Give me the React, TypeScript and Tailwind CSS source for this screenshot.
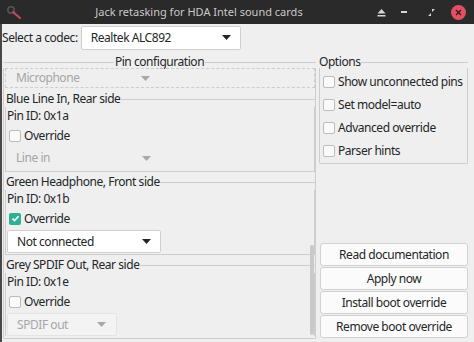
import { ReactNode } from "react";

function Check({ checked = false }: { checked?: boolean }) {
  if (checked) {
    return (
      <span className="w-[12px] h-[12px] rounded-[2px] bg-[#2eaf96] flex items-center justify-center shrink-0">
        <svg width="9" height="9" viewBox="0 0 9 9">
          <path d="M1.5 4.6 L3.6 6.6 L7.6 2.2" stroke="#fff" strokeWidth="1.6" fill="none" />
        </svg>
      </span>
    );
  }
  return <span className="w-[12px] h-[12px] rounded-[2px] border border-[#bcbcbc] bg-[#fafafa] shrink-0" />;
}

function CheckRow({ label, checked }: { label: string; checked?: boolean }) {
  return (
    <div className="flex items-center gap-[3px] h-[23px]">
      <Check checked={checked} />
      <span>{label}</span>
    </div>
  );
}

function Arrow({ dim = false }: { dim?: boolean }) {
  return (
    <svg width="9" height="5" viewBox="0 0 9 5">
      <path d="M0 0 H9 L4.5 5 Z" fill={dim ? "#a8a8a8" : "#232627"} />
    </svg>
  );
}

function PinGroup({ title, children, last }: { title: string; children: ReactNode; last?: boolean }) {
  return (
    <div className="flex flex-col">
      <div className="flex items-center h-[17px]">
        <span className="pl-[1px]">{title}</span>
        <div className="flex-1 border-t border-[#cdcdcd] mt-[2px]" />
      </div>
      <div className={`border-l border-r border-[#cdcdcd] ${last ? "" : "border-b"} flex flex-col pl-[1px]`}>
        {children}
      </div>
    </div>
  );
}

export default function App() {
  return (
    <div className="w-[474px] h-[342px] flex flex-col bg-[#efefef] text-[#232627] font-['Noto_Sans',sans-serif] text-[12px] tracking-[-0.45px] overflow-hidden">
      {/* title bar */}
      <div className="h-[24px] bg-[#2a2a2a] flex items-center shrink-0">
        <div className="w-[28px] flex justify-center">
          <svg width="18" height="16" viewBox="0 0 18 16">
            <circle cx="6" cy="6" r="3.2" stroke="#555" strokeWidth="1.6" fill="none" />
            <path d="M8 8 L15 14" stroke="#c2475f" strokeWidth="2.2" strokeLinecap="round" />
          </svg>
        </div>
        <div className="w-[342px] text-center text-[#c9c9c9] text-[11px] tracking-[0px]">
          Jack retasking for HDA Intel sound cards
        </div>
        <div className="flex items-center">
          <div className="w-[22px] flex justify-center">
            <svg width="9" height="9" viewBox="0 0 9 9">
              <path d="M4.5 1 L8.5 5.5 H0.5 Z M0.5 7 H8.5 V8.5 H0.5 Z" fill="#d6d6d6" />
            </svg>
          </div>
          <div className="w-[24px] flex justify-center">
            <div className="w-[6px] h-[2px] bg-[#d6d6d6]" />
          </div>
          <div className="w-[30px] flex justify-center">
            <svg width="9" height="9" viewBox="0 0 9 9">
              <path d="M5 4 L5 1 L8 1 Z M4 5 L4 8 L1 8 Z" fill="#d6d6d6" />
            </svg>
          </div>
          <div className="ml-[5px] w-[15px] h-[15px] rounded-full bg-[#e34f63] flex items-center justify-center">
            <svg width="7" height="7" viewBox="0 0 7 7">
              <path d="M1 1 L6 6 M6 1 L1 6" stroke="#3a1a1f" strokeWidth="1.5" />
            </svg>
          </div>
        </div>
      </div>

      {/* body */}
      <div className="flex-1 flex flex-col border-l-2 border-[#484848] min-h-0">
        <div className="flex items-center h-[25px] mt-[1px] gap-[3px]">
          <span>Select a codec:</span>
          <div className="w-[160px] h-[24px] bg-white border border-[#d0d0d0] rounded-[2px] flex items-center justify-between pl-[9px] pr-[9px]">
            <span>Realtek ALC892</span>
            <Arrow />
          </div>
        </div>

        <div className="flex flex-1 min-h-0 pt-[5px] pb-[3px]">
          {/* Pin configuration */}
          <div className="w-[313px] ml-[1px] flex flex-col">
            <div className="flex items-center h-[13px]">
              <div className="flex-1 border-t border-[#cdcdcd] mt-[2px]" />
              <span className="px-[1px]">Pin configuration</span>
              <div className="flex-1 border-t border-[#cdcdcd] mt-[2px]" />
            </div>
            <div className="flex-1 relative border-l border-r border-b border-[#cdcdcd] rounded-b-[2px] overflow-hidden pl-[1px]">
              <div className="flex flex-col">
                <div className="h-[20px] border-t border-dashed border-x border-b border-[#cdcdcd] flex items-start pt-[1px]">
                  <div className="w-[150px] flex items-center justify-between pl-[10px] pr-[6px] text-[#a6a6a6] h-[16px]">
                    <span>Microphone</span>
                    <Arrow dim />
                  </div>
                </div>

                <div className="h-[2px]" />
                <PinGroup title="Blue Line In, Rear side">
                  <div className="h-[17px] flex items-center">Pin ID: 0x1a</div>
                  <div className="pl-[2px]">
                    <CheckRow label="Override" />
                  </div>
                  <div className="w-[150px] h-[22px] flex items-center justify-between pl-[9px] pr-[6px] text-[#a6a6a6] mb-[2px]">
                    <span>Line in</span>
                    <Arrow dim />
                  </div>
                </PinGroup>

                <div className="h-[1px]" />
                <PinGroup title="Green Headphone, Front side">
                  <div className="h-[17px] flex items-center">Pin ID: 0x1b</div>
                  <div className="pl-[2px]">
                    <CheckRow label="Override" checked />
                  </div>
                  <div className="w-[154px] h-[23px] bg-white border border-[#d0d0d0] rounded-[2px] flex items-center justify-between pl-[9px] pr-[9px] mb-[1px]">
                    <span>Not connected</span>
                    <Arrow />
                  </div>
                </PinGroup>

                <div className="h-[1px]" />
                <PinGroup title="Grey SPDIF Out, Rear side" last>
                  <div className="h-[17px] flex items-center">Pin ID: 0x1e</div>
                  <div className="pl-[2px]">
                    <CheckRow label="Override" />
                  </div>
                  <div className="w-[110px] h-[23px] bg-[#f3f3f3] border border-[#e4e4e4] rounded-[2px] flex items-center justify-between pl-[9px] pr-[10px] text-[#a6a6a6]">
                    <span>SPDIF out</span>
                    <Arrow dim />
                  </div>
                </PinGroup>
              </div>
              {/* scrollbar */}
              <div className="absolute right-[1px] top-[177px] w-[4px] h-[90px] rounded-[2px] bg-[#c9c9c9]" />
            </div>
          </div>

          {/* right column */}
          <div className="flex-1 flex flex-col justify-between ml-[3px] mr-[6px]">
            <div className="flex flex-col">
              <div className="flex items-center h-[13px]">
                <span className="pr-[1px]">Options</span>
                <div className="flex-1 border-t border-[#cdcdcd] mt-[2px]" />
              </div>
              <div className="border-l border-r border-b border-[#cdcdcd] rounded-b-[2px] flex flex-col pl-[3px] pt-[2px] pb-[1px]">
                <CheckRow label="Show unconnected pins" />
                <CheckRow label="Set model=auto" />
                <CheckRow label="Advanced override" />
                <CheckRow label="Parser hints" />
              </div>
            </div>
            <div className="flex flex-col gap-[1px] pl-[1px] mb-[1px]">
              {["Read documentation", "Apply now", "Install boot override", "Remove boot override"].map((b) => (
                <div
                  key={b}
                  className="h-[23px] bg-[#fbfbfb] border border-[#d2d2d2] rounded-[3px] flex items-center justify-center"
                >
                  {b}
                </div>
              ))}
            </div>
          </div>
        </div>
      </div>
    </div>
  );
}
